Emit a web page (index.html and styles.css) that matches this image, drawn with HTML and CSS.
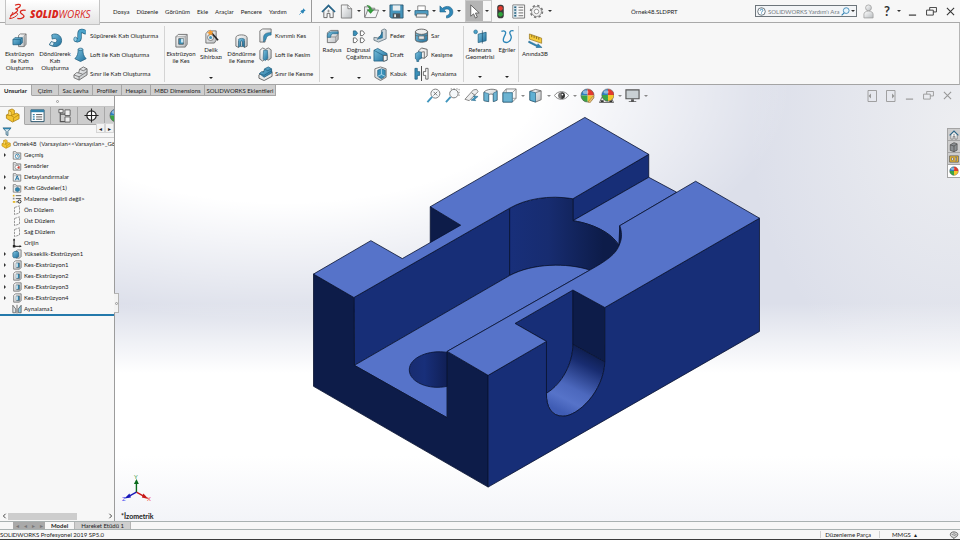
FILE: index.html
```html
<!DOCTYPE html>
<html lang="tr">
<head>
  <meta charset="UTF-8" />
  <meta name="viewport" content="width=device-width, initial-scale=1.0" />
  <title>Örnek48.SLDPRT</title>
  <link rel="stylesheet" href="styles.css">
</head>
<body>
  <!-- Ortak simgeler -->
  <svg class="symbols" aria-hidden="true">
    <defs>
      <linearGradient id="steel" x1="0" y1="0" x2="1" y2="1"><stop offset="0" stop-color="#7cc3e0" /><stop offset="1" stop-color="#1f6f9c" /></linearGradient>
      <linearGradient id="grey" x1="0" y1="0" x2="1" y2="1"><stop offset="0" stop-color="#fff" /><stop offset="1" stop-color="#b9bdc0" /></linearGradient>
    </defs>
    <symbol id="i-home" viewBox="0 0 16 16">
      <path d="M3 7v7.500h3.500V10h3v4.500H13V7L8 2.500z" fill="#f3f5f6" stroke="#555" stroke-width=".9" />
      <path d="M1 8.500 8 1.500l7 7" fill="none" stroke="#26658a" stroke-width="1.700" />
      <path d="M6.500 7.500h3M8 6v3" stroke="#777" stroke-width=".7" />
    </symbol>
    <symbol id="i-folder" viewBox="0 0 12 12">
      <path d="M1.500 11V2h3l1 1.500h5V11z" fill="#f1f3f4" stroke="#777" />
      <path d="M1.500 4.500h8" stroke="#999" stroke-width=".7" />
    </symbol>
    <symbol id="i-plane" viewBox="0 0 12 12">
      <path d="M3 3 9 1v8.500L3 11.500z" fill="#fbfbfb" stroke="#777" stroke-width=".9" stroke-dasharray="3 1" />
    </symbol>
    <symbol id="i-cut" viewBox="0 0 12 12">
      <path d="M2 3 4 1h7v8l-2 2H2z" fill="url(#grey)" stroke="#666" stroke-width=".9" />
      <path d="M5 3.500h4V9H5z" fill="#2f83ad" stroke="#555" stroke-width=".6" />
      <path d="M5 4v5l2-1V4z" fill="#d7ecf5" />
    </symbol>
    <symbol id="i-part" viewBox="0 0 16 16">
      <path d="M4 2.500 7.500 1 10 2.500v4l2.500-1L15 7v4.500L8 15 1.500 11V7.500L4 6z" fill="#f4c430" stroke="#a87b0c" stroke-width=".8" />
      <path d="M4 2.500 6.500 4v4L10 10.200 15 7M6.500 8 1.500 7.500M10 6.500 6.500 8M9 10.500V14" fill="none" stroke="#a87b0c" stroke-width=".7" />
      <path d="M4.500 3.500 6 4.500v3.300L4.500 7z" fill="#fbe58c" />
    </symbol>
    <symbol id="i-ball" viewBox="0 0 16 16">
      <path d="M8 8V1a7 7 0 0 0-7 7z" fill="#2e7fc1" />
      <path d="M8 8h7a7 7 0 0 0-7-7z" fill="#e23a2e" />
      <path d="M8 8v7a7 7 0 0 0 7-7z" fill="#f3c62b" />
      <path d="M8 8H1a7 7 0 0 0 7 7z" fill="#3aa445" />
      <circle cx="8" cy="8" r="7" fill="none" stroke="#555" stroke-width=".6" />
      <ellipse cx="6" cy="4.500" rx="3" ry="2" fill="#fff" opacity=".45" />
    </symbol>
    <symbol id="i-restore" viewBox="0 0 12 10">
      <path d="M4 3.500v-3h7.500v5H8" fill="none" stroke="currentColor" />
      <path d="M.5 3.500H8v5.500H.5z" fill="none" stroke="currentColor" />
    </symbol>
    <symbol id="i-close" viewBox="0 0 10 10">
      <path d="m1 1 8 8M9 1 1 9" stroke="currentColor" stroke-width="1.200" />
    </symbol>
  </svg>

  <header class="titlebar">
    <a class="logo" href="#">
      <svg class="logo-mark" viewBox="0 0 54 54" aria-hidden="true">
        <path d="M18 7c8-4 18-4 16 1-1 4-8 8-15 10 7 0 9 3 5 7-4 5-14 10-20 13" fill="none" stroke="#d9261c" stroke-width="3.500" />
        <path d="M12 27C8 36 4 42 2 47c10-1 22-8 24-13 1-3-3-5-8-5" fill="none" stroke="#d9261c" stroke-width="3" />
        <path d="M50 22c-7-2-17 0-16 6 1 5 12 7 11 12-1 6-12 8-20 6" fill="none" stroke="#d9261c" stroke-width="4" />
      </svg>
      <span class="logo-text"><b>SOLID</b>WORKS</span>
    </a>
    <nav class="menu">
      <a href="#">Dosya</a>
      <a href="#">Düzenle</a>
      <a href="#">Görünüm</a>
      <a href="#">Ekle</a>
      <a href="#">Araçlar</a>
      <a href="#">Pencere</a>
      <a href="#">Yardım</a>
    </nav>
    <button class="pin" aria-label="Menüyü sabitle">
      <svg viewBox="0 0 10 10"><path d="M6 .5 9.500 4 7.500 4.500 6.500 7 5 8 2 5l1-1.500L5.500 2.500z" fill="#2d86b8" /><path d="M3.500 6.500.5 9.500" stroke="#2d86b8" /></svg>
    </button>
    <div class="toolbar">
      <button class="tool home" aria-label="Giriş"><svg><use href="#i-home" /></svg></button>
      <button class="tool" aria-label="Yeni">
        <svg viewBox="0 0 16 16"><path d="M2.500 1h7l4 4v10h-11z" fill="url(#grey)" stroke="#666" stroke-width=".8" /><path d="M9.500 1v4h4" fill="#fff" stroke="#666" stroke-width=".8" /></svg>
      </button>
      <button class="drop" aria-label="Yeni seçenekleri"></button>
      <button class="tool" aria-label="Aç">
        <svg viewBox="0 0 16 16"><path d="M.5 14V3h4l1 1.500h6V7" fill="#e9ecee" stroke="#666" stroke-width=".8" /><path d="M.8 14.500 4 6.500h11.500l-3 8z" fill="#f4f6f7" stroke="#666" stroke-width=".8" /><path d="M3 1.500c3 0 5 1.500 5 4.500h2.500L7 10 3.500 6H6C6 3.500 4.500 2.500 3 1.500z" fill="#35a13c" stroke="#1e7425" stroke-width=".5" /></svg>
      </button>
      <button class="drop" aria-label="Aç seçenekleri"></button>
      <button class="tool" aria-label="Kaydet">
        <svg viewBox="0 0 16 16"><path d="M1 1h14v14H2.500L1 13.500z" fill="#4594bb" stroke="#28536b" stroke-width=".9" /><path d="M4 1.500h8v5.500H4z" fill="#e9eef0" /><path d="M4 10h8v5H4z" fill="#49545b" /><path d="M5.500 11h2v3h-2z" fill="#dfe6e9" /></svg>
      </button>
      <button class="drop" aria-label="Kaydet seçenekleri"></button>
      <button class="tool" aria-label="Yazdır">
        <svg viewBox="0 0 16 16"><path d="M4 2h8v5H4z" fill="#fff" stroke="#666" stroke-width=".8" /><path d="M1 7h14v5H1z" fill="#4d9cc2" stroke="#29607e" stroke-width=".8" /><path d="M3 10.500h10l.8 3.500H2.200z" fill="#f3f3f3" stroke="#555" stroke-width=".8" /></svg>
      </button>
      <button class="drop" aria-label="Yazdır seçenekleri"></button>
      <button class="tool" aria-label="Geri al">
        <svg viewBox="0 0 16 16"><path d="M1 2v6.500h6.500L5.400 6.400C8 4.500 11.500 5 11.500 8.500c0 2-1.500 3.500-3.500 4V15c4-.5 6.800-3 6.800-6.500C14.800 2.500 8 .8 3.600 4.600z" fill="#2f88b8" stroke="#1d5f84" stroke-width=".6" /></svg>
      </button>
      <button class="drop" aria-label="Geri al seçenekleri"></button>
      <div class="pressed">
        <button class="tool" aria-label="Seç">
          <svg viewBox="0 0 16 16"><path d="M4 1v12l3-2.500 2 4.500 2-1-2-4.300 4-.2z" fill="#fff" stroke="#555" stroke-width=".9" /></svg>
        </button>
        <button class="drop" aria-label="Seç seçenekleri"></button>
      </div>
      <button class="tool wide" aria-label="Yeniden oluştur">
        <svg viewBox="0 0 16 16"><rect x="4.500" y=".8" width="7" height="14.400" rx="3" fill="#3a3a3a" /><circle cx="8" cy="4.600" r="2.500" fill="#e03b30" /><circle cx="8" cy="11" r="2.500" fill="#2fa53b" /></svg>
      </button>
      <button class="tool wide" aria-label="Dosya özellikleri">
        <svg viewBox="0 0 16 16"><path d="M2 1h12.500v14H2z" fill="#fafafa" stroke="#666" stroke-width=".9" /><path d="M2.500 1.500h4v13h-4z" fill="#cfdde5" /><path d="M3.500 3.500h2m-2 3h2m-2 3h2m-2 3h2" stroke="#24617f" stroke-width="1.600" /><path d="M8 3.500h5m-5 3h5m-5 3h5m-5 3h5" stroke="#555" stroke-width=".9" /></svg>
      </button>
      <button class="tool wide" aria-label="Seçenekler">
        <svg viewBox="0 0 16 16"><circle cx="8" cy="8" r="6.300" fill="none" stroke="#777" stroke-width="1.800" stroke-dasharray="2.500 2.450" /><circle cx="8" cy="8" r="5.300" fill="#f3f3f3" stroke="#777" stroke-width=".8" /><circle cx="8" cy="8" r="2.400" fill="#fff" stroke="#777" stroke-width=".8" /></svg>
      </button>
      <button class="drop" aria-label="Diğer seçenekler"></button>
    </div>
    <h1 class="doc-title">Örnek48.SLDPRT</h1>
    <div class="search">
      <svg viewBox="0 0 10 10" aria-hidden="true"><circle cx="5" cy="5" r="4.200" fill="#fff" stroke="#3c4a55" stroke-width=".8" /><path d="M3.600 4c0-2 2.900-2 2.900-.2C6.500 5 5 5 5 6.200M5 7.200v.8" fill="none" stroke="#2b7db0" /></svg>
      <input type="text" aria-label="SOLIDWORKS Yardım'ı Ara" placeholder="SOLIDWORKS Yardım'ı Ara">
      <button aria-label="Ara"><svg viewBox="0 0 10 10"><circle cx="5.800" cy="4" r="3.200" fill="#e7f4fb" stroke="#2b7db0" stroke-width=".9" /><path d="M3.500 6.500.7 9.300" stroke="#2b7db0" stroke-width="1.200" /></svg></button>
      <button class="drop" aria-label="Arama türü"></button>
    </div>
    <div class="window-tools">
      <button aria-label="Oturum aç"><svg class="user" viewBox="0 0 12 16"><circle cx="6" cy="4" r="3.200" fill="url(#grey)" stroke="#999" stroke-width=".8" /><path d="M1 15V11c0-2 2-3.500 5-3.500s5 1.500 5 3.500v4z" fill="url(#grey)" stroke="#999" stroke-width=".8" /></svg></button>
      <button class="help" aria-label="Yardım">?</button>
      <button class="drop" aria-label="Yardım seçenekleri"></button>
      <button aria-label="Küçült"><svg class="win" viewBox="0 0 10 10"><path d="M1 9h8" stroke="currentColor" stroke-width="1.300" /></svg></button>
      <button aria-label="Geri yükle"><svg class="win"><use href="#i-restore" /></svg></button>
      <button aria-label="Kapat"><svg class="win"><use href="#i-close" /></svg></button>
    </div>
  </header>

  <section class="ribbon">
    <div class="group boss">
      <button class="big">
        <svg viewBox="0 0 16 16"><path d="M7 2.500 9 1h6v11l-2 2.500H7z" fill="url(#grey)" stroke="#666" stroke-width=".8" /><path d="M13 14.500V3.500L15 1" fill="none" stroke="#666" stroke-width=".7" /><path d="M1 7 3 5h8v5.500L9 12.500H1z" fill="url(#steel)" stroke="#1f5d7e" stroke-width=".8" /><path d="M1 7h8v5.500M9 7l2-2" fill="none" stroke="#1f5d7e" stroke-width=".7" /></svg>
        <span>Ekstrüzyon<br>ile Katı<br>Oluşturma</span>
      </button>
      <button class="big">
        <svg viewBox="0 0 16 16"><path d="M4 2C8-.5 14.500 2 14.500 8S8 16.500 1.500 12.500l2-3.300c3 1.800 6 1.300 6-1.400C9.500 6 7 5.300 4.500 6.500z" fill="url(#steel)" stroke="#1f5d7e" stroke-width=".8" /><path d="m1.500 12.500 2-3.300 3 .8-1 3.700z" fill="#d9edf6" stroke="#1f5d7e" stroke-width=".6" /></svg>
        <span>Döndürerek<br>Katı<br>Oluşturma</span>
      </button>
      <ul class="stack">
        <li><button><svg viewBox="0 0 16 16"><path d="M2.500 12c2 2 4.500 1 4.500-2 0-4-.5-7 2.500-7 2 0 2.500 1.500 4 1.500" fill="none" stroke="#1f5d7e" stroke-width="4.600" /><path d="M2.500 12c2 2 4.500 1 4.500-2 0-4-.5-7 2.500-7 2 0 2.500 1.500 4 1.500" fill="none" stroke="#4ba3ca" stroke-width="3.200" /><ellipse cx="2.600" cy="12" rx="1.800" ry="2.400" fill="#8fcbe4" stroke="#1f5d7e" stroke-width=".6" /></svg>Süpürerek Katı Oluşturma</button></li>
        <li><button><svg viewBox="0 0 16 16"><path d="M5.500 2.500h5c0 4 .5 7 3.500 10L8 15.500 2 12.500c3-3 3.500-6 3.500-10z" fill="url(#steel)" stroke="#1f5d7e" stroke-width=".8" /><ellipse cx="8" cy="2.500" rx="2.500" ry="1.300" fill="#8fcbe4" stroke="#1f5d7e" stroke-width=".7" /></svg>Loft ile Katı Oluşturma</button></li>
        <li><button><svg viewBox="0 0 16 16"><path d="M1 9.500 4 7l2 .5 1-4 4-2.500 4 2v6.500L6.500 15 1 12.500z" fill="url(#grey)" stroke="#666" stroke-width=".9" /><path d="m1 9.500 5.500 2L15 6M6.500 11.500V15M7 3.500l4 1.500 4-2M6 7.500l4 1" fill="none" stroke="#666" stroke-width=".8" /></svg>Sınır ile Katı Oluşturma</button></li>
      </ul>
    </div>

    <div class="group cut">
      <button class="big">
        <svg viewBox="0 0 16 16"><path d="M2 4 4.500 1.500H14V12l-2 3H2z" fill="url(#grey)" stroke="#666" stroke-width=".9" /><path d="M2 4h10v11M12 4l2-2.500" fill="none" stroke="#888" stroke-width=".7" /><path d="M5 6h5v6H5z" fill="#3f95bd" stroke="#444" stroke-width=".7" /><path d="m5 12 2.500-2H10V6H7.500v4z" fill="#c7e6f3" /></svg>
        <span>Ekstrüzyon<br>ile Kes</span>
      </button>
      <button class="big has-drop">
        <svg viewBox="0 0 16 16"><path d="M2 5 4.500 2H13v10l-2 3H2z" fill="url(#grey)" stroke="#666" stroke-width=".9" /><circle cx="7" cy="9" r="3.300" fill="#eee" stroke="#666" stroke-width=".8" /><circle cx="7" cy="9" r="1.600" fill="#3f95bd" /><path d="m8 4 7 8" stroke="#222" stroke-width="1.700" /><path d="m6.500.5 1 2 2.300-.5-1.200 2 1.200 2-2.300-.5-1.500 2-.5-2.500-2.500-.7 2.500-1.300z" fill="#f59a2c" /></svg>
        <span>Delik<br>Sihirbazı</span>
      </button>
      <button class="big">
        <svg viewBox="0 0 16 16"><path d="M2 14V5c0-4 12-4 12 0v9l-3 1.500v-7H9v6H7v-6H5v7z" fill="url(#grey)" stroke="#666" stroke-width=".9" /><path d="M5 15V6.500c1-1 5-1 6 0V15l-2-1V9.500L8 8 7 9.500V14z" fill="url(#steel)" stroke="#1f5d7e" stroke-width=".6" /></svg>
        <span>Döndürme<br>ile Kesme</span>
      </button>
      <ul class="stack">
        <li><button><svg viewBox="0 0 16 16"><path d="M2 3 5 1h9v4l-2 1.500C8.500 7 8 10 7.500 15H2z" fill="url(#grey)" stroke="#666" stroke-width=".9" /><path d="M6 15V9.500C6.500 6 9 5 14 5v2.500C11 7.500 9 9 8.500 12z" fill="#3a91ba" stroke="#1f5d7e" stroke-width=".6" /></svg>Kıvrımlı Kes</button></li>
        <li><button><svg viewBox="0 0 16 16"><path d="M2 3.500 5 1l3 1.500L11 1l3 2v9l-3 2-3-1.500L5 15l-3-2z" fill="url(#grey)" stroke="#666" stroke-width=".9" /><path d="M6 3.500h4l.5 8.500L8 14.500 5.500 13z" fill="url(#steel)" stroke="#1f5d7e" stroke-width=".6" /></svg>Loft ile Kesim</button></li>
        <li><button><svg viewBox="0 0 16 16"><path d="M1 9.500 4 7l7-4.500 4 3.500v5L6.500 15.500 1 13z" fill="#eaeaea" stroke="#555" stroke-width=".9" /><path d="M1.500 8 4 6l2 .5 1-3.500 4-2 3.500 2v4.500l-8 4.500z" fill="url(#steel)" stroke="#1f5d7e" stroke-width=".8" /><path d="M7 3.500 10.500 5l4-2M1.500 8l5 2 8-5" fill="none" stroke="#17506f" stroke-width=".6" /></svg>Sınır ile Kesme</button></li>
      </ul>
    </div>

    <div class="group feature">
      <button class="big has-drop">
        <svg viewBox="0 0 16 16"><path d="M2.500 4 6 1.500h8V11l-3 3.500H2.500z" fill="url(#grey)" stroke="#666" stroke-width=".9" /><path d="M2.500 7C3 4 4.500 3 7 3h7v2H9C7 5 6.500 6 6 9H2.500z" fill="url(#steel)" stroke="#1f5d7e" stroke-width=".6" /><path d="M6 8.500h5.500v6M11.500 8.500 14 5.500" fill="none" stroke="#777" stroke-width=".7" /></svg>
        <span>Radyus</span>
      </button>
      <button class="big has-drop">
        <svg viewBox="0 0 16 16"><path d="M2.500 2h2.500l2 2.500L5 7H2.500z" fill="#3a91ba" stroke="#1f5d7e" stroke-width=".8" /><path d="M10 2h2.500l2 2.500-2 2.500H10zM2.500 9.500h2.500l2 2.500-2 2.500H2.500zM10 9.500h2.500l2 2.500-2 2.500H10z" fill="#fff" stroke="#555" stroke-width=".9" /></svg>
        <span>Doğrusal<br>Çoğaltma</span>
      </button>
      <ul class="stack">
        <li><button><svg viewBox="0 0 16 16"><path d="M9 2.500 12 1l2 1v9.500L6 15l-5-2v-3l4 .5 4-3z" fill="#cdd6db" stroke="#5a6b76" stroke-width=".8" /><path d="M10 4v6.500L4.500 12C7 10 8.500 7.500 10 4z" fill="#2f83ad" stroke="#1f5d7e" stroke-width=".6" /></svg>Feder</button></li>
        <li><button><svg viewBox="0 0 16 16"><path d="M1 3.500 5 1.500 15 7v7l-3 1H1z" fill="url(#steel)" stroke="#1f5d7e" stroke-width=".8" /><path d="m1 3.500 10 5.500h4M11 9v6" fill="none" stroke="#1f5d7e" stroke-width=".7" /><path d="M11 9h4v5l-3 1h-1z" fill="#f1f1f1" stroke="#444" stroke-width=".7" /></svg>Draft</button></li>
        <li><button><svg viewBox="0 0 16 16"><path d="M2 3 8 1l6 2v9l-6 3.500L2 12z" fill="url(#grey)" stroke="#666" stroke-width=".9" /><path d="M5 4.500 9 3l4 1.500V11l-4 2.500L5 11z" fill="#3a91ba" stroke="#1f5d7e" stroke-width=".7" /><path d="M9 3v6l4 2M9 9l-4 2" fill="none" stroke="#c7e6f3" stroke-width=".8" /></svg>Kabuk</button></li>
      </ul>
      <ul class="stack">
        <li><button><svg viewBox="0 0 16 16"><path d="M1.500 4v8.500c0 3.500 13 3.500 13 0V4z" fill="url(#steel)" stroke="#555" stroke-width=".9" /><ellipse cx="8" cy="4" rx="6.500" ry="2.800" fill="#eee" stroke="#555" stroke-width=".9" /><path d="M5 8.500h6v3.500H5zM1.500 8l3.500.5M11 8.500l3.500-.5" fill="#e8e8e8" stroke="#555" stroke-width=".7" /></svg>Sar</button></li>
        <li><button><svg viewBox="0 0 16 16"><path d="M5 4 8 1l6 1.500v7L11 12l-6-1z" fill="#eee" stroke="#555" stroke-width=".9" /><path d="M1.500 7 5 5l3 .5V12l-3 1.500v2H3v-2l-1.500-1z" fill="url(#steel)" stroke="#1f5d7e" stroke-width=".7" /><path d="m8 5.500 3-.5v7" fill="none" stroke="#555" stroke-width=".8" /></svg>Kesişme</button></li>
        <li><button><svg viewBox="0 0 16 16"><path d="M1 2.500h2.500V6H6v4H3.500v4H1z" fill="#3a91ba" stroke="#1f5d7e" stroke-width=".8" /><path d="M15 2.500h-2.500V6H10v4h2.500v4H15z" fill="#fff" stroke="#555" stroke-width=".9" /><path d="M8 0v16" stroke="#444" /></svg>Aynalama</button></li>
      </ul>
    </div>

    <div class="group reference">
      <button class="big has-drop">
        <svg viewBox="0 0 16 16"><path d="M5.500 5.500 14 3.500v9l-8.500 2z" fill="url(#steel)" stroke="#1f5d7e" stroke-width=".8" /><path d="M10 1.500v14" stroke="#1d4a66" stroke-width=".7" /><circle cx="2.800" cy="3" r="2" fill="#4ba3ca" stroke="#1f5d7e" stroke-width=".6" /></svg>
        <span>Referans<br>Geometrisi</span>
      </button>
      <button class="big has-drop">
        <svg viewBox="0 0 16 16"><path d="M1.500 2.500C5 1 7 3 5.500 6S2 12 4.500 13.800c3 1.800 7-.8 7.500-4.300.4-3-2-4-1.500-6 .4-1.500 2-2 4-1.500" fill="none" stroke="#2d86b8" stroke-width="1.400" /></svg>
        <span>Eğriler</span>
      </button>
    </div>

    <div class="group instant">
      <button class="big">
        <svg viewBox="0 0 16 16"><path d="m1.500 1 13 4.500V11l-13-4.500z" fill="#f6cc3c" stroke="#8c6a12" stroke-width=".7" /><path d="M4 2v2.500M6.500 3v2.500M9 3.800v2.500M11.500 4.700v2.500" stroke="#5f4809" stroke-width=".7" /><path d="m1 8.500 9 4.500.6-1.500L15 15.500l-6.300.2.500-1.200L.5 10z" fill="#2d86b8" stroke="#1f5d7e" stroke-width=".5" /></svg>
        <span>Anında3B</span>
      </button>
    </div>
  </section>

  <main class="workspace">
    <nav class="ribbon-tabs">
      <button class="active">Unsurlar</button>
      <button>Çizim</button>
      <button>Sac Levha</button>
      <button>Profiller</button>
      <button>Hesapla</button>
      <button>MBD Dimensions</button>
      <button>SOLIDWORKS Eklentileri</button>
    </nav>

    <aside class="panel">
      <div class="grip"><i></i></div>
      <div class="panel-tabs">
        <button class="active" aria-label="Unsur ağacı"><svg><use href="#i-part" /></svg></button>
        <button aria-label="Özellikler"><svg viewBox="0 0 16 16"><path d="M1 2h14v12.500H1z" fill="#fff" stroke="#28536b" /><path d="M1 2h14v2.500H1z" fill="#2f83ad" /><path d="M3 7h2m-2 2.500h2M3 12h2" stroke="#2f83ad" stroke-width="1.400" /><path d="M6.500 7H13m-6.500 2.500H13M6.500 12H13" stroke="#555" /></svg></button>
        <button aria-label="Konfigürasyonlar"><svg viewBox="0 0 16 16"><path d="M2 1.500h4.500v3.500H2z" fill="#eee" stroke="#555" stroke-width=".9" /><path d="M3.500 5v9.500H9M3.500 6.500H9" fill="none" stroke="#555" stroke-width="1.200" /><path d="M8.500 2H14v6H8.500zM8.500 9.500H14v5.500H8.500z" fill="#eee" stroke="#555" stroke-width=".9" /></svg></button>
        <button aria-label="DimXpert"><svg viewBox="0 0 16 16"><circle cx="8" cy="8" r="5" fill="#fff" stroke="#222" stroke-width="1.200" /><path d="M8 .5v15M.5 8h15" stroke="#222" stroke-width="1.200" /></svg></button>
        <button class="clipped" aria-label="Görüntü"><svg><use href="#i-ball" /></svg></button>
        <div class="pager"><button aria-label="Önceki">◂</button><button aria-label="Sonraki">▸</button></div>
      </div>
      <label class="filter">
        <svg viewBox="0 0 10 10"><path d="M.5 1h9L6 5v4.500L4 8.500V5z" fill="#d7e6ee" stroke="#2a5f7c" stroke-width=".9" /><path d="M.5 1h9L8.500 2.500h-7z" fill="#2f83ad" /></svg>
        <input type="text" aria-label="Filtre">
      </label>
      <ul class="tree">
        <li class="root"><svg><use href="#i-part" /></svg>Örnek48&nbsp; (Varsayılan&lt;&lt;Varsayılan&gt;_Gö</li>
        <li class="open"><svg viewBox="0 0 12 12"><use href="#i-folder" /><circle cx="6.500" cy="7.500" r="2.500" fill="#fff" stroke="#2f83ad" /><path d="M6.500 6v1.500H8" fill="none" stroke="#333" stroke-width=".6" /></svg>Geçmiş</li>
        <li><svg viewBox="0 0 12 12"><use href="#i-folder" /><circle cx="6" cy="7.500" r="2.500" fill="#fff" stroke="#555" stroke-width=".7" /><path d="M6 7.500 9 9.500V6z" fill="#d8382c" /></svg>Sensörler</li>
        <li class="open"><svg viewBox="0 0 12 12"><use href="#i-folder" /><path d="m4 10 2.200-5.500L8.500 10M5 8.200h2.600" fill="none" stroke="#1f6f9c" stroke-width="1.100" /></svg>Detaylandırmalar</li>
        <li class="open"><svg viewBox="0 0 12 12"><use href="#i-folder" /><path d="M4 6.500 6.500 5 9 6.500V9l-2.500 1.500L4 9z" fill="#2f83ad" stroke="#1f5d7e" stroke-width=".6" /></svg>Katı Gövdeler(1)</li>
        <li><svg viewBox="0 0 12 12"><path d="M1 2h2" stroke="#e0b21c" stroke-width="2" /><path d="M1 5.500h2" stroke="#888" stroke-width="2" /><path d="M1 9.500h3" stroke="#e0b21c" stroke-width="2" /><path d="M4.500 2H11M4.500 5.500H11M5 9.500h2" stroke="#444" /><circle cx="9" cy="9" r="1.800" fill="#fff" stroke="#222" stroke-width="1.200" /></svg>Malzeme &lt;belirli değil&gt;</li>
        <li><svg><use href="#i-plane" /></svg>Ön Düzlem</li>
        <li><svg><use href="#i-plane" /></svg>Üst Düzlem</li>
        <li><svg><use href="#i-plane" /></svg>Sağ Düzlem</li>
        <li><svg viewBox="0 0 12 12"><path d="M2.500 1v9H11" fill="none" stroke="#222" stroke-width="1.200" /><path d="M1 8.500h3v3H1zM9 8.800l2.500 1.200L9 11.300zM1.200 3 2.500.5 3.800 3z" fill="#222" /></svg>Orijin</li>
        <li class="open"><svg viewBox="0 0 12 12"><path d="M5 2 7 1h4v8l-2 2H5z" fill="url(#grey)" stroke="#666" stroke-width=".8" /><path d="m1 4.500 2-1.500h4l1 1.500V9l-2 1.500H2L1 9z" fill="url(#steel)" stroke="#1f5d7e" stroke-width=".8" /></svg>Yükseklik-Ekstrüzyon1</li>
        <li class="open"><svg><use href="#i-cut" /></svg>Kes-Ekstrüzyon1</li>
        <li class="open"><svg><use href="#i-cut" /></svg>Kes-Ekstrüzyon2</li>
        <li class="open"><svg><use href="#i-cut" /></svg>Kes-Ekstrüzyon3</li>
        <li class="open"><svg><use href="#i-cut" /></svg>Kes-Ekstrüzyon4</li>
        <li><svg viewBox="0 0 12 12"><path d="M1 1.500 4.500 6v4.500H1z" fill="#dfe4e7" stroke="#555" stroke-width=".9" /><path d="M11 1.500 7.500 6v4.500H11z" fill="#8fcbe4" stroke="#555" stroke-width=".9" /><path d="M6 1v10.500" stroke="#444" stroke-width=".9" /></svg>Aynalama1</li>
      </ul>
      <div class="hscroll">
        <button aria-label="Sola kaydır"><svg viewBox="0 0 6 8"><path d="M4.500 1 1.500 4l3 3" fill="none" stroke="#333" stroke-width="1.200" /></svg></button>
        <div class="track"><div class="thumb"></div></div>
        <button aria-label="Sağa kaydır"><svg viewBox="0 0 6 8"><path d="m1.500 1 3 3-3 3" fill="none" stroke="#333" stroke-width="1.200" /></svg></button>
      </div>
    </aside>

    <section class="viewport">
      <!-- Parça modeli -->
      <svg class="model" viewBox="115 85 845 437" role="img" aria-label="Örnek48 izometrik görünüm">
        <defs>
          <linearGradient id="bore" gradientUnits="userSpaceOnUse" x1="510" y1="0" x2="620" y2="0"><stop offset="0" stop-color="#182f7a" /><stop offset=".35" stop-color="#172c70" /><stop offset=".85" stop-color="#0d1c49" /><stop offset="1" stop-color="#0d1c49" /></linearGradient>
          <linearGradient id="hole" gradientUnits="userSpaceOnUse" x1="409" y1="0" x2="447" y2="0"><stop offset="0" stop-color="#182c70" /><stop offset=".4" stop-color="#182f7a" /><stop offset="1" stop-color="#101f55" /></linearGradient>
          <linearGradient id="slot" gradientUnits="userSpaceOnUse" x1="592" y1="354" x2="562" y2="413"><stop offset="0" stop-color="#0e1e50" /><stop offset=".2" stop-color="#182c70" /><stop offset=".6" stop-color="#4c68bd" /><stop offset=".8" stop-color="#5673c9" /><stop offset="1" stop-color="#3f5cb4" /></linearGradient>
        </defs>
        <g stroke="#081230" stroke-width=".8" stroke-linejoin="round">
          <path class="dark" d="M430 207v37l31-18.500z" />
          <path class="mid" d="M573 199 649 154.500v23L573 221z" />
          <path class="light" d="M573 221 649 177.500 677 192.500 620 226V247C614 236 598 225 573 221z" />
          <path fill="url(#bore)" d="M509.500 208.500C526 199 549 195 573 199v22c25 4 41 15 46 25-4 10-14 16-29 24.500-23-7-57-7-80.500 5.500z" />
          <path class="mid" d="M353.500 298 509.500 208.500V276L354 366z" />
          <path class="light" d="M354 366 509.500 276C533 263.500 567 263 590 270.500L447 352v66.500z" />
          <path fill="url(#hole)" d="M447 353C429 350 409 358 409 370.500S429 391 447 387z" />
          <path class="dark" d="M313 274.500 353.500 298 354 366l93 52.500V352l41 24v112L313 387z" />
          <path class="light" d="M313 274.500 370.500 241 402 259l58.500-33.500L430 207l155-89.500 64 37L573 199c-24-4-47 0-63.500 9.500l-156 89.500z" />
          <path class="dark" d="M620 226c2.500 7 2.500 13-1 20.500z" />
          <path class="mid" d="m515 324 58-33.500V345c0 18-10 39-26.500 49v-52z" />
          <path class="dark" d="M573 290.500 605 308v54.500L573 345z" />
          <path fill="url(#slot)" d="m573 345 32 17.500C604 392 578 417 563 417c-11 0-17-9-16.500-23C563 384 573 363 573 345z" />
          <path class="mid" d="m488 376 58.500-34V394c-.5 14 5.500 23 16.500 23 15 0 41-25 42-54.500V308l155-89.500V332L488 488z" />
          <path class="light" d="M620 226 696 181.500 760 218.500 605 308 573 290.500 515 324l31.500 18-58.500 34-41-24 143-81.500c16-9 27-16 30-26.500 2.500-6 2-12 0-18z" />
        </g>
        <!-- Eksen üçlüsü -->
        <g stroke-width="1.400" fill="none">
          <path d="M135.500 493v-10" stroke="#0b6b1c" /><path d="m135.500 493 9 5" stroke="#c81818" /><path d="m135.500 493-9 5" stroke="#1818b8" />
        </g>
        <path d="m133 485 2.500-5 2.500 5z" fill="#0b6b1c" /><path d="m141 498.500 1.500-4 5 5.500z" fill="#c81818" /><path d="m130 498.500-1.500-4-5 5z" fill="#1818b8" />
        <g class="axis"><text x="133" y="480" fill="#48a04e">Y</text><text x="146" y="502" fill="#f04848">X</text><text x="121" y="502" fill="#4040ee">Z</text></g>
      </svg>

      <div class="hud">
        <div class="view-tools">
          <button aria-label="Sığdır"><svg viewBox="0 0 16 16"><circle cx="10" cy="6" r="4.800" fill="#f5f8fa" stroke="#777" /><path d="M6.500 9.500 1.500 15" stroke="#3f95bd" stroke-width="2" /><path d="m8 4 4 4M12 4 8 8" stroke="#666" stroke-width=".9" /></svg></button>
          <button aria-label="Alana yakınlaştır"><svg viewBox="0 0 16 16"><path d="M6 1h9v9" fill="none" stroke="#888" stroke-dasharray="1.500 1.500" /><circle cx="9.500" cy="6" r="4.500" fill="#f5f8fa" stroke="#777" /><path d="M6 9.500 1 15" stroke="#3f95bd" stroke-width="2" /></svg></button>
          <button aria-label="Önceki görünüm"><svg viewBox="0 0 16 16"><path d="M1 12 10 2l3.500-.5L15 4l-9.500 9.500z" fill="#eee" stroke="#777" stroke-width=".9" /><path d="m8 5 4 3" stroke="#777" /><path d="m15 9-5-.5 1 1.500-3.500 3 5 .5-1-1.500z" fill="#3f95bd" stroke="#1f5d7e" stroke-width=".5" /></svg></button>
          <button aria-label="Kesit görünümü"><svg viewBox="0 0 16 16"><path d="M1 4.500C4 1 11 .5 15 2.500V13l-4 1.500V7C9 6 7 6.500 6 7.500v7l-5-1z" fill="url(#grey)" stroke="#666" stroke-width=".9" /><path d="M1 4.500 6 6v8.500l-5-1zM11 5.500l4-2V13l-4 1.500z" fill="#6db4d2" stroke="#1f5d7e" stroke-width=".6" /></svg></button>
          <button aria-label="Görünüm yönü"><svg viewBox="0 0 16 16"><path d="M1 5 4.500 1H15v10l-4 4H1z" fill="#f7f7f7" stroke="#777" stroke-width=".9" /><path d="M1 5h10v10H1z" fill="#6db4d2" stroke="#1f5d7e" stroke-width=".8" /><path d="m11 5 4-4M4.500 1v4M11 11h4" stroke="#777" stroke-width=".7" /></svg></button>
          <button class="drop" aria-label="Yön seçenekleri"></button>
          <button aria-label="Görüntü stili"><svg viewBox="0 0 16 16"><path d="M2 3.500 8 1.500 14 3v9.500L8 15l-6-2z" fill="url(#grey)" stroke="#666" stroke-width=".9" /><path d="m2 3.500 6 1.500V15l-6-2z" fill="#5fb0d3" stroke="#1f5d7e" stroke-width=".7" /><path d="m8 5 6-2" stroke="#666" stroke-width=".8" /></svg></button>
          <button class="drop" aria-label="Stil seçenekleri"></button>
          <button aria-label="Gizle/Göster"><svg viewBox="0 0 16 16"><path d="M.5 8C4 2.500 12 2.500 15.500 8 12 13.500 4 13.500.5 8z" fill="#fff" stroke="#777" stroke-width=".9" /><circle cx="8" cy="8" r="3.600" fill="#777" /><path d="M8 4.400a3.600 3.600 0 0 1 0 7.200z" fill="#333" /><circle cx="9" cy="7" r=".9" fill="#fff" /></svg></button>
          <button class="drop" aria-label="Gizle seçenekleri"></button>
          <button aria-label="Görünüşü düzenle"><svg viewBox="0 0 16 16"><use href="#i-ball" /><path d="m8.500 15 5-6 1.500 1-4.500 6z" fill="#e8c07a" stroke="#886430" stroke-width=".5" /></svg></button>
          <button aria-label="Sahne uygula"><svg viewBox="0 0 16 16"><path d="M3 10h10l2.500 5.500H.5z" fill="#eee" stroke="#444" stroke-width=".8" /><path d="M2 13h3v2H2zM7 12h3v2H7zM11 13h3v2h-3z" fill="#333" /><svg x="2" y="0" width="12" height="12"><use href="#i-ball" /></svg></svg></button>
          <button class="drop" aria-label="Sahne seçenekleri"></button>
          <button aria-label="Görünüm ayarları"><svg viewBox="0 0 16 16"><path d="M1 2h14v9.500H1z" fill="#c9d0d4" stroke="#555" stroke-width="1.200" /><path d="M6.500 12h3v2h-3zM4 14h8v1H4z" fill="#555" /></svg></button>
          <button class="drop" aria-label="Ayar seçenekleri"></button>
        </div>
        <div class="doc-tools">
          <button aria-label="Sola"><svg class="page" viewBox="0 0 10 12"><path d="M1 .5h8.500v11H1z" fill="none" stroke="currentColor" stroke-width=".9" /><path d="M4 3.500v5L1.500 6z" fill="currentColor" /></svg></button>
          <button aria-label="Sağa"><svg class="page" viewBox="0 0 10 12"><path d="M.5.5H9v11H.5z" fill="none" stroke="currentColor" stroke-width=".9" /><path d="M6 3.500v5L8.500 6z" fill="currentColor" /></svg></button>
          <button aria-label="Belgeyi küçült"><svg class="win" viewBox="0 0 10 10"><path d="M1 9h8" stroke="currentColor" stroke-width="1.300" /></svg></button>
          <button aria-label="Belgeyi geri yükle"><svg class="win"><use href="#i-restore" /></svg></button>
          <button aria-label="Belgeyi kapat"><svg class="win"><use href="#i-close" /></svg></button>
        </div>
      </div>

      <div class="splitter"><i></i></div>
      <div class="taskpane">
        <button aria-label="Kaynaklar"><svg><use href="#i-home" /></svg></button>
        <button aria-label="Tasarım kütüphanesi"><svg viewBox="0 0 16 16"><path d="M2 4.500 8 1l5 2v10l-5 2.500-6-2z" fill="#8b8f92" stroke="#444" /><path d="m2 4.500 6 2 5-3.500M8 6.500v9" fill="none" stroke="#444" /></svg></button>
        <button aria-label="Görünüm paleti"><svg viewBox="0 0 16 16"><path d="M1 3h14v10H1z" fill="#f0b92c" stroke="#555" stroke-width="1.200" /><path d="M4 6h3v4H4zM10 5h2v6h-2z" fill="#fff" stroke="#555" /></svg></button>
        <button class="active" aria-label="Görünümler"><svg><use href="#i-ball" /></svg></button>
      </div>
      <p class="view-name">*İzometrik</p>
    </section>
  </main>

  <div class="model-tabs">
    <div class="steps"><button>◂</button><button>◂</button><button>▸</button><button>▸</button></div>
    <button class="model-tab active">Model</button>
    <button class="model-tab">Hareket Etüdü 1</button>
  </div>

  <footer class="status">
    <span class="product">SOLIDWORKS Profesyonel 2019 SP5.0</span>
    <span class="cell">Düzenleme Parça</span>
    <span class="cell units">MMGS <i>▴</i></span>
    <svg viewBox="0 0 12 10" aria-hidden="true"><path d="M2 2.500C4 .5 8 .5 10.500 3c1 2-1 4.500-3 5l-2 1.500-.5-1.500C2 7.500.5 5 2 2.500z" fill="#ddd" stroke="#555" /><path d="m3 4 5 2M5 2.500 9.500 5" stroke="#666" stroke-width=".8" /></svg>
  </footer>
</body>
</html>
```
FILE: styles.css
```css
* {
  box-sizing: border-box;
  margin: 0;
  padding: 0;
}

body {
  height: 100vh;
  display: flex;
  flex-direction: column;
  overflow: hidden;
  background: #f7f7f7;
  border-bottom: 1px solid #3c3c3c;
  color: #1c1c1c;
  font-family: Lato, "Noto Sans", sans-serif;
  font-size: 6px;
  line-height: 7px;
}

button,
input {
  font: inherit;
  color: inherit;
  background: none;
  border: 0;
  border-radius: 0;
  outline: 0;
}

button {
  display: flex;
  align-items: center;
  justify-content: center;
  white-space: nowrap;
}

a {
  color: inherit;
  text-decoration: none;
}

ul {
  list-style: none;
}

svg {
  display: block;
  flex: none;
}

.symbols {
  position: absolute;
  width: 0;
  height: 0;
}

/* Açılır ok */
.drop::after {
  content: "";
  border: 2px solid transparent;
  border-top-color: #333;
  border-bottom: 0;
}

/* Başlık çubuğu */
.titlebar {
  flex: none;
  display: flex;
  align-items: center;
  height: 23px;
  padding-left: 5px;
  border-bottom: 1px solid #a9a9a9;
}

.logo {
  align-self: flex-start;
  display: flex;
  align-items: center;
  gap: 3px;
  width: 95px;
  height: 25px;
  padding: 1px 3px;
  position: relative;
  z-index: 3;
  background: linear-gradient(#fff, #e4e4e4);
  border: 1px solid #c4c4c4;
  border-top: 0;
  color: #d9261c;
}

.logo-mark {
  width: 18px;
  height: 18px;
}

.logo-text {
  padding-top: 4px;
  font-family: "Open Sans", sans-serif;
  font-size: 10px;
  line-height: 12px;
  font-style: italic;
}

.logo-text b {
  font-weight: 800;
}

.menu {
  display: flex;
  gap: 7px;
  margin-left: 13px;
}

.pin {
  width: 8px;
  margin-left: 12px;
}

.pin svg {
  width: 7px;
  height: 7px;
}

.toolbar {
  display: flex;
  align-self: stretch;
  margin-left: 4px;
  padding-left: 7px;
  border-left: 1px solid #999;
}

.tool {
  width: 17px;
}

.tool svg {
  width: 15px;
  height: 15px;
}

.tool.wide {
  width: 18px;
}

.tool.home {
  width: 19px;
}

.toolbar .drop {
  width: 8px;
}

.pressed {
  display: flex;
  margin-left: 2px;
  border: 1px solid #c8c8c8;
}

.pressed .tool {
  background: #b4b4b4;
}

.doc-title {
  flex: 1;
  text-align: center;
  font-size: 6px;
  font-weight: 400;
}

.search {
  display: flex;
  align-items: center;
  width: 102px;
  height: 12px;
  padding: 0 1px;
  border: 1px solid #6d757b;
  background: #f3f5f7;
}

.search svg {
  width: 9px;
  height: 9px;
}

.search input {
  flex: 1;
  min-width: 0;
  padding-left: 2px;
}

.search input::placeholder {
  color: #747b82;
  opacity: 1;
}

.search .drop {
  width: 5px;
}

.window-tools {
  display: flex;
  align-items: center;
  color: #333;
}

.window-tools button {
  width: 19px;
  height: 20px;
}

.window-tools button:first-child {
  width: 22px;
}

.window-tools .help {
  width: 16px;
  font-size: 13px;
  font-weight: 700;
}

.window-tools .drop {
  width: 8px;
}

.user {
  width: 11px;
  height: 15px;
}

.win {
  width: 11px;
  height: 9px;
}

.page {
  width: 10px;
  height: 12px;
}

/* Komut şeridi */
.ribbon {
  flex: none;
  display: flex;
  height: 62px;
  padding-top: 3px;
  border-bottom: 1px solid #a4a4a4;
  border-right: 1px solid #b5b5b5;
}

.group {
  display: grid;
  border-right: 1px solid #d4d4d4;
  height: 56px;
}

.boss {
  grid-template-columns: 35px 34px 91px;
  padding-left: 2px;
  column-gap: 1px;
}

.cut {
  grid-template-columns: 32px 28px 33px 61px;
}

.feature {
  grid-template-columns: 24px 27px 40px 49px;
  column-gap: 1px;
}

.reference {
  grid-template-columns: 32px 22px;
}

.instant {
  grid-template-columns: 32px;
  border-right: 0;
}

.big {
  flex-direction: column;
  justify-content: flex-start;
  gap: 2px;
  padding-top: 7px;
  position: relative;
}

.big svg {
  width: 15px;
  height: 15px;
}

.big.has-drop {
  padding-top: 3px;
}

.big.has-drop::after {
  content: "";
  position: absolute;
  bottom: 4px;
  border: 2px solid transparent;
  border-top-color: #222;
  border-bottom: 0;
}

.stack {
  display: grid;
  grid-template-rows: repeat(3, 19px);
}

.stack li,
.stack button {
  display: flex;
  align-items: center;
  gap: 2px;
}

.stack svg {
  width: 15px;
  height: 15px;
}

/* Çalışma alanı */
.workspace {
  flex: 1;
  min-height: 0;
  position: relative;
  display: grid;
  grid-template-columns: 115px 1fr;
}

.ribbon-tabs {
  position: absolute;
  top: 0;
  left: 0;
  z-index: 2;
  display: grid;
  grid-template-columns: 32px 27px 34px 29px 29px 54px 71px;
  height: 11px;
}

.ribbon-tabs button {
  background: #cfcfcf;
  border-right: 1px solid #a6a6a6;
  border-bottom: 1px solid #a6a6a6;
}

.ribbon-tabs .active {
  background: #f7f7f7;
  border-bottom-color: #f7f7f7;
  font-weight: 700;
}

.panel {
  display: flex;
  flex-direction: column;
  min-width: 0;
  padding-top: 11px;
  background: #f7f7f7;
  border-right: 1px solid #9c9c9c;
}

.grip {
  display: flex;
  align-items: center;
  justify-content: center;
  height: 11px;
  border-bottom: 1px solid #c4c4c4;
}

.grip i,
.splitter i {
  width: 3px;
  height: 3px;
  border: 1px solid #999;
  border-radius: 50%;
}

.panel-tabs {
  display: grid;
  grid-template-columns: 25px 26px 27px 27px 9px;
  height: 18px;
  position: relative;
  background: #cdcdcd;
}

.panel-tabs > button {
  border-right: 1px solid #a8a8a8;
  border-bottom: 1px solid #a8a8a8;
  overflow: hidden;
}

.panel-tabs > button.active {
  background: #f7f7f7;
  border-bottom-color: #f7f7f7;
}

.panel-tabs > button.clipped {
  justify-content: flex-start;
  padding-left: 4px;
  border-right: 0;
}

.panel-tabs svg {
  width: 15px;
  height: 15px;
}

.pager {
  position: absolute;
  right: 0;
  bottom: -8px;
  display: flex;
  background: #f3f3f3;
}

.pager button {
  width: 9px;
  height: 10px;
  border: 1px solid #d6d6d6;
}

.filter {
  display: flex;
  align-items: center;
  height: 13px;
  padding: 0 2px;
  border-bottom: 1px solid #d0d0d0;
}

.filter svg {
  width: 10px;
  height: 9px;
}

.filter input {
  flex: 1;
  min-width: 0;
}

.tree {
  border-bottom: 2px solid #2479ab;
}

.tree li {
  display: flex;
  align-items: center;
  gap: 2px;
  height: 11px;
  padding-left: 12px;
  position: relative;
  white-space: nowrap;
  overflow: hidden;
}

.tree li.root {
  padding-left: 1px;
}

.tree svg {
  width: 10px;
  height: 10px;
}

.tree .open::before {
  content: "";
  position: absolute;
  left: 4px;
  border: 2px solid transparent;
  border-left-color: #333;
  border-right: 0;
}

.hscroll {
  display: flex;
  align-items: center;
  height: 10px;
  margin-top: auto;
}

.hscroll button {
  width: 8px;
}

.hscroll svg {
  width: 5px;
  height: 6px;
}

.hscroll .track {
  flex: 1;
}

.hscroll .thumb {
  width: 70%;
  height: 7px;
  background: #cdcdcd;
}

/* Grafik alanı */
.viewport {
  position: relative;
  min-width: 0;
  background:
    linear-gradient(to bottom, rgba(255, 255, 255, 0) 50%, #fff 66%, #fff 85%, #f3f4f8 100%),
    radial-gradient(ellipse 60% 54% at 20% 0, #fff 50%, rgba(255, 255, 255, 0) 100%),
    radial-gradient(ellipse 25% 60% at 100% 10%, #edeef1, rgba(237, 238, 241, 0)),
    #dcdfea;
}

.model {
  position: absolute;
  inset: 0;
  width: 100%;
  height: 100%;
}

.light {
  fill: #5673c9;
}

.mid {
  fill: #172e77;
}

.dark {
  fill: #0d1c49;
}

.axis {
  font-size: 6px;
}

.hud {
  position: relative;
  display: flex;
  justify-content: space-between;
  padding: 2px 3px 0 309px;
}

.view-tools,
.doc-tools {
  display: flex;
}

.view-tools button {
  width: 19px;
  height: 17px;
}

.view-tools svg {
  width: 15px;
  height: 15px;
}

.view-tools .drop {
  width: 7px;
}

.view-tools .drop::after {
  border-top-color: #888;
}

.doc-tools {
  color: #979797;
}

.doc-tools button {
  width: 19px;
  height: 17px;
}

.splitter {
  position: absolute;
  top: 208px;
  left: -1px;
  display: flex;
  align-items: center;
  justify-content: center;
  width: 5px;
  height: 20px;
  background: #f3f3f3;
  border: 1px solid #b4b4b4;
  border-left: 0;
}

.taskpane {
  position: absolute;
  top: 43px;
  right: 0;
  border: 1px solid #a4a4a4;
  border-right: 0;
}

.taskpane button {
  width: 12px;
  height: 12px;
  background: #cdcdcd;
  border-bottom: 1px solid #a4a4a4;
}

.taskpane .active {
  background: #fff;
  border-bottom: 0;
}

.taskpane svg {
  width: 10px;
  height: 10px;
}

.view-name {
  position: absolute;
  left: 6px;
  bottom: 1px;
  font-size: 7px;
  font-weight: 700;
}

/* Alt sekmeler */
.model-tabs {
  flex: none;
  display: flex;
  height: 9px;
  padding-left: 13px;
  border-top: 1px solid #a9b1b1;
  border-bottom: 1px solid #a9b1b1;
}

.steps {
  display: flex;
  background: #a9a9a9;
  color: #777;
}

.steps button {
  width: 8px;
}

.model-tab {
  padding: 0 6px;
  background: #cfcfcf;
  border-right: 1px solid #b4b4b4;
}

.model-tab.active {
  background: #f7f7f7;
  font-weight: 700;
}

/* Durum çubuğu */
.status {
  flex: none;
  display: flex;
  align-items: center;
  height: 9px;
}

.status .product {
  flex: 1;
}

.status .cell {
  padding: 0 4px;
  border-left: 1px solid #d0d0d0;
}

.status .units {
  display: flex;
  gap: 3px;
  width: 62px;
  margin-left: 4px;
  padding-left: 12px;
}

.status .units i {
  font-style: normal;
}

.status svg {
  width: 10px;
  height: 8px;
  margin: 0 1px 0 8px;
}
```
